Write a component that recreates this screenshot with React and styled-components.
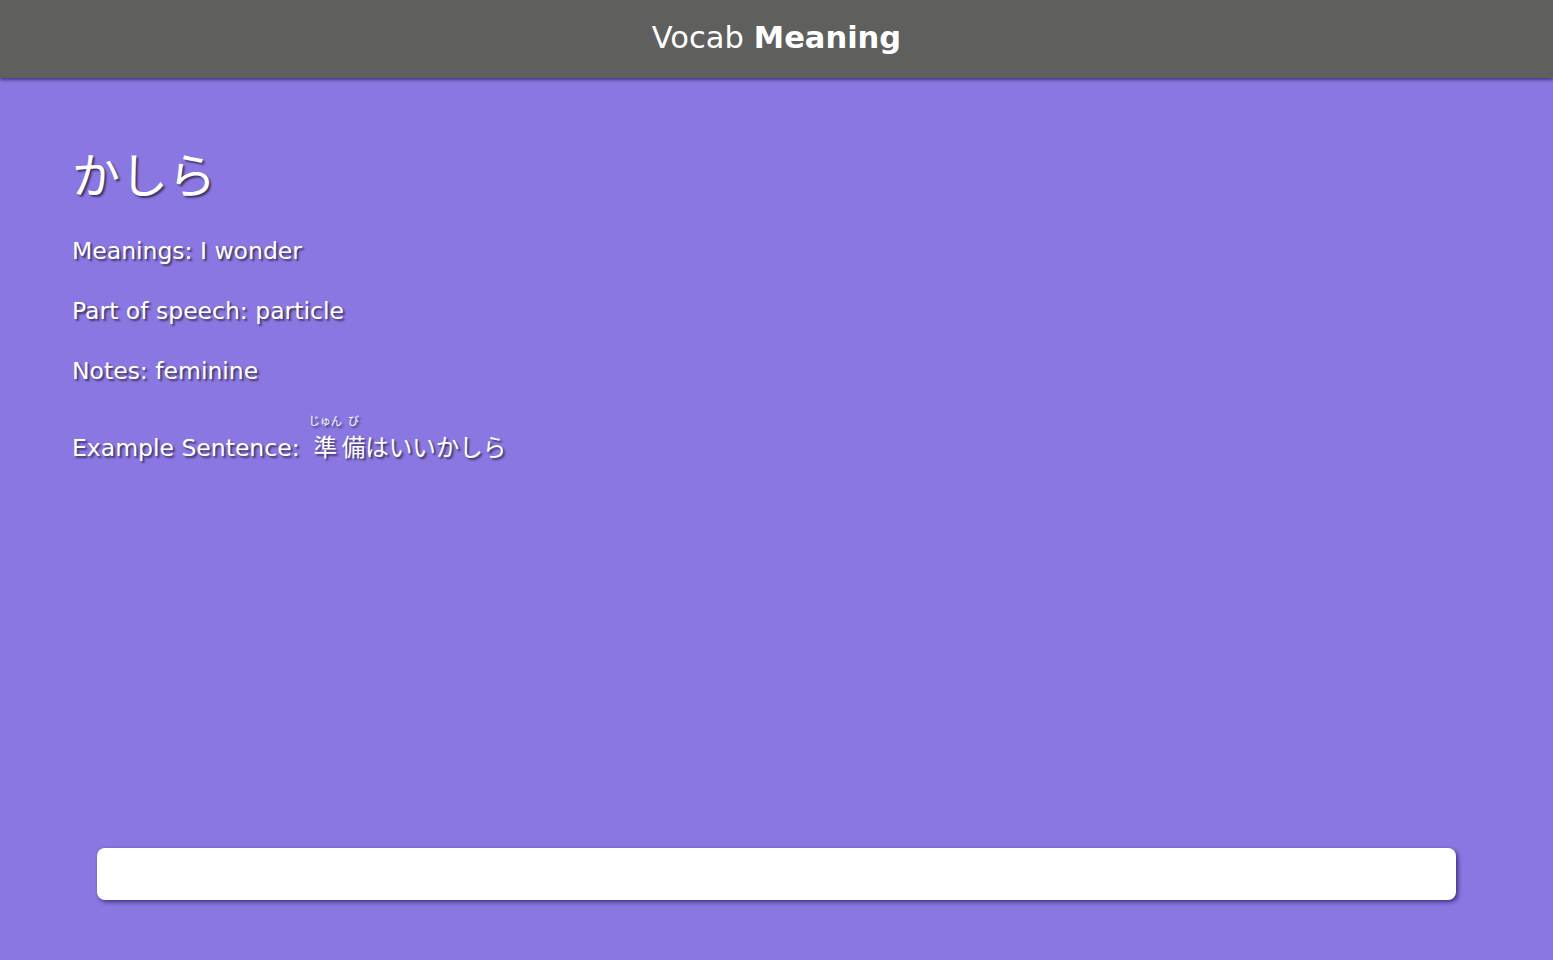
import React from "react";
import styled, { createGlobalStyle } from "styled-components";

const Global = createGlobalStyle`
  html, body { margin: 0; padding: 0; }
  body {
    background: #8a77e1;
    font-family: "DejaVu Sans", "Noto Sans CJK JP", sans-serif;
    color: #fff;
  }
`;

const Page = styled.div`
  min-height: 100vh;
  display: flex;
  flex-direction: column;
`;

const Header = styled.header`
  height: 78px;
  box-sizing: border-box;
  padding-bottom: 4px;
  background: #5f5f5d;
  box-shadow: 0 2px 3px rgba(40, 30, 90, 0.7);
  display: flex;
  align-items: center;
  justify-content: center;
  font-size: 30.5px;
  position: relative;
  z-index: 1;
`;

const Strong = styled.span`
  font-weight: bold;
  margin-left: 10px;
`;

const Content = styled.main`
  flex: 1;
  padding: 61px 72px 0;
  text-shadow: 2px 2px 2px rgba(0, 0, 0, 0.55);
`;

const Word = styled.h1`
  margin: 0 0 30px;
  font-family: "Noto Sans CJK JP", sans-serif;
  font-weight: 400;
  font-size: 48px;
  line-height: 67px;
`;

const Line = styled.p`
  margin: ${(p) => p.$top || 0}px 0 ${(p) => p.$gap ?? 30}px;
  font-size: 23.5px;
  line-height: 30px;
`;

const Jp = styled.span`
  font-family: "Noto Sans CJK JP", sans-serif;
  margin-left: 14px;
`;

const Rt = styled.rt`
  font-size: 11px;
  line-height: 1;
  padding-bottom: 7px;
`;

const Footer = styled.div`
  display: flex;
  justify-content: center;
  padding-bottom: 60px;
`;

const Input = styled.input`
  width: 1359px;
  height: 52px;
  box-sizing: border-box;
  border: none;
  border-radius: 8px;
  background: #fff;
  box-shadow: 2px 2px 4px rgba(40, 25, 100, 0.75);
  outline: none;
  font-size: 20px;
  padding: 0 16px;
`;

export default function App() {
  return (
    <Page>
      <Global />
      <Header>
        Vocab<Strong>Meaning</Strong>
      </Header>
      <Content>
        <Word>かしら</Word>
        <Line>Meanings: I wonder</Line>
        <Line>Part of speech: particle</Line>
        <Line $gap={0}>Notes: feminine</Line>
        <Line $top={26} $gap={0}>
          Example Sentence:
          <Jp>
            <ruby>準<Rt>じゅん</Rt></ruby>
            <ruby>備<Rt>び</Rt></ruby>はいいかしら
          </Jp>
        </Line>
      </Content>
      <Footer>
        <Input type="text" />
      </Footer>
    </Page>
  );
}
